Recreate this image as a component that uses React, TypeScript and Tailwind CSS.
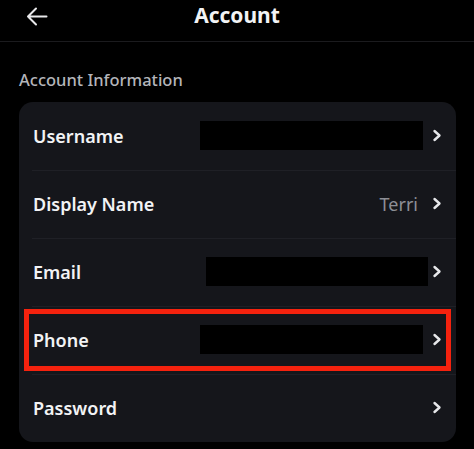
import React from "react";

type Row = {
  label: string;
  value?: string;
  // redacted value box (width, right gap before chevron)
  redact?: { w: string; mr: string };
  highlight?: boolean;
};

const rows: Row[] = [
  { label: "Username", redact: { w: "w-[223px]", mr: "mr-[9px]" } },
  { label: "Display Name", value: "Terri" },
  { label: "Email", redact: { w: "w-[222px]", mr: "mr-[4px]" } },
  { label: "Phone", redact: { w: "w-[223px]", mr: "mr-[9px]" }, highlight: true },
  { label: "Password" },
];

function Chevron() {
  return (
    <svg width="10" height="13" viewBox="0 0 10 13" fill="none" className="shrink-0">
      <path
        d="M2.5 2 L7.5 6.5 L2.5 11"
        stroke="#e6e7ea"
        strokeWidth="2.4"
        strokeLinecap="round"
        strokeLinejoin="round"
      />
    </svg>
  );
}

function BackArrow() {
  return (
    <svg width="22" height="19" viewBox="0 0 22 19" fill="none">
      <path
        d="M20.5 9.5H2 M10 1.5 L2 9.5 L10 17.5"
        stroke="#e8e8ea"
        strokeWidth="2"
        strokeLinecap="round"
        strokeLinejoin="round"
      />
    </svg>
  );
}

export default function App() {
  return (
    <div
      className="w-[474px] h-[449px] overflow-hidden bg-black text-[#f2f3f5]"
      style={{ fontFamily: '"Noto Sans", "Open Sans", sans-serif' }}
    >
      {/* Header */}
      <header className="relative h-[42px] flex items-center justify-center border-b border-[#1b1b1e]">
        <button type="button" className="absolute left-[26px] top-[7px]">
          <BackArrow />
        </button>
        <h1 className="text-[21px] font-bold leading-none -mt-[10px]">Account</h1>
      </header>

      <div className="px-[19px] pr-[18px]">
        <h2 className="mt-[30px] text-[16.5px] font-medium text-[#b4b5ba] leading-none">
          Account Information
        </h2>

        <div className="mt-[13px] rounded-[14px] bg-[#15161b] overflow-hidden">
          {rows.map((row, i) => (
            <div
              key={row.label}
              className="relative h-[68px] flex items-center pl-[14px] pr-[14px]"
            >
              {i > 0 && (
                <div className="absolute top-0 left-[13px] right-0 h-px bg-[#1f2026]" />
              )}
              <span className="text-[18px] font-semibold leading-none">{row.label}</span>
              <div className="flex-1" />
              {row.value && (
                <span className="mr-[14px] text-[18px] text-[#8d8f96] leading-none">
                  {row.value}
                </span>
              )}
              {row.redact && (
                <div className={`h-[29px] bg-black ${row.redact.w} ${row.redact.mr}`} />
              )}
              <Chevron />
              {row.highlight && (
                <div className="absolute inset-x-[5px] top-[3px] bottom-[3px] border-[5px] border-[#f5220e] pointer-events-none" />
              )}
            </div>
          ))}
        </div>
      </div>
    </div>
  );
}
